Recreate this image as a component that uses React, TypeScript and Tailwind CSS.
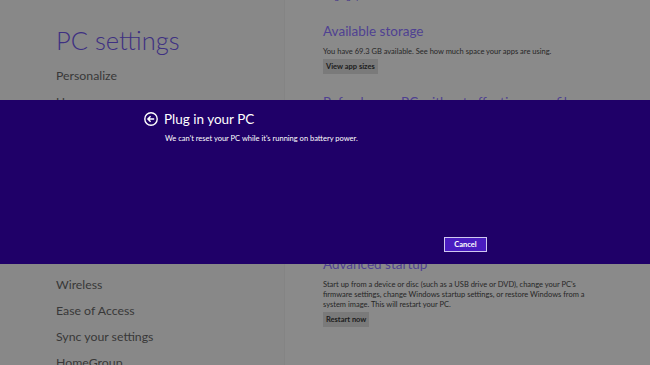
const navItems = [
  "Personalize",
  "Users",
  "Notifications",
  "Search",
  "Share",
  "General",
  "Privacy",
  "Devices",
  "Wireless",
  "Ease of Access",
  "Sync your settings",
  "HomeGroup",
  "Windows Update",
];

function GrayButton({ label }: { label: string }) {
  return (
    <button
      type="button"
      className="mt-[2px] block h-[15px] bg-[#7a7a7a] px-[3px] text-[7.5px] font-bold leading-[15px] text-[#1c1c1c]"
    >
      {label}
    </button>
  );
}

function Section({
  title,
  lines,
  button,
}: {
  title: string;
  lines: string[];
  button: string;
}) {
  return (
    <section className="mt-[20px] flex flex-col items-start">
      <h2 className="h-[16px] whitespace-nowrap text-[13.5px] leading-[16px] text-[#4f4192]">{title}</h2>
      <div className="mt-[8px] text-[7.5px] leading-[10px] text-[#262626]">
        {lines.map((line) => (
          <p key={line} className="whitespace-nowrap">
            {line}
          </p>
        ))}
      </div>
      <GrayButton label={button} />
    </section>
  );
}

export default function App() {
  return (
    <div
      className="relative h-[365px] w-[650px] overflow-hidden bg-[#8a8a8a]"
      style={{ fontFamily: 'Lato, "Noto Sans", sans-serif' }}
    >
      <div className="flex h-full">
        {/* left nav pane */}
        <aside className="w-[285px] shrink-0 border-r border-[#848484] bg-[#888888] pl-[56px] pt-[22px]">
          <h1 className="text-[25.5px] font-light leading-[36px] text-[#3e3082]">PC settings</h1>
          <ul className="mt-[9px] flex flex-col">
            {navItems.map((item) => (
              <li key={item} className="h-[26.1px] text-[12.3px] leading-[18px] text-[#383838]">
                {item}
              </li>
            ))}
          </ul>
        </aside>

        {/* right content pane */}
        <main className="flex-1 pl-[38px]">
          <div className="-mt-[7px] h-[10px] text-[7.5px] leading-[10px] text-[#3d2d8a]">Language preferences</div>
          <Section
            title="Available storage"
            lines={["You have 69.3 GB available. See how much space your apps are using."]}
            button="View app sizes"
          />
          <Section
            title="Refresh your PC without affecting your files"
            lines={[
              "If your PC isn't running well, you can refresh it without losing your photos,",
              "music, videos and other personal files.",
            ]}
            button="Get started"
          />
          <Section
            title="Remove everything and reinstall Windows"
            lines={[
              "If you want to recycle your PC or start over completely, you can reset it to its",
              "factory settings.",
            ]}
            button="Get started"
          />
          <Section
            title="Advanced startup"
            lines={[
              "Start up from a device or disc (such as a USB drive or DVD), change your PC's",
              "firmware settings, change Windows startup settings, or restore Windows from a",
              "system image. This will restart your PC.",
            ]}
            button="Restart now"
          />
        </main>
      </div>

      {/* flyout banner over the page */}
      <div className="absolute left-0 right-0 top-[100px] h-[164px] bg-[#1f0068] text-white">
        <div className="flex flex-col pl-[144px] pt-[11px]">
          <div className="flex items-center gap-[6px]">
            <svg width="14" height="14" viewBox="0 0 14 14" fill="none" stroke="white" strokeWidth="1.4">
              <circle cx="7" cy="7" r="6.2" />
              <path d="M10.2 7H4M6.6 4.3L3.9 7l2.7 2.7" />
            </svg>
            <h2 className="text-[13.5px] leading-[16px]">Plug in your PC</h2>
          </div>
          <p className="ml-[21px] mt-[7px] text-[7.5px] leading-[10px]">
            We can't reset your PC while it's running on battery power.
          </p>
        </div>
        <button
          type="button"
          className="absolute left-[444px] top-[137px] block h-[15px] w-[43px] border border-[#d0c8f0] bg-[#4a1cc0] text-[7.5px] font-bold leading-[12px] text-white"
        >
          Cancel
        </button>
      </div>
    </div>
  );
}
